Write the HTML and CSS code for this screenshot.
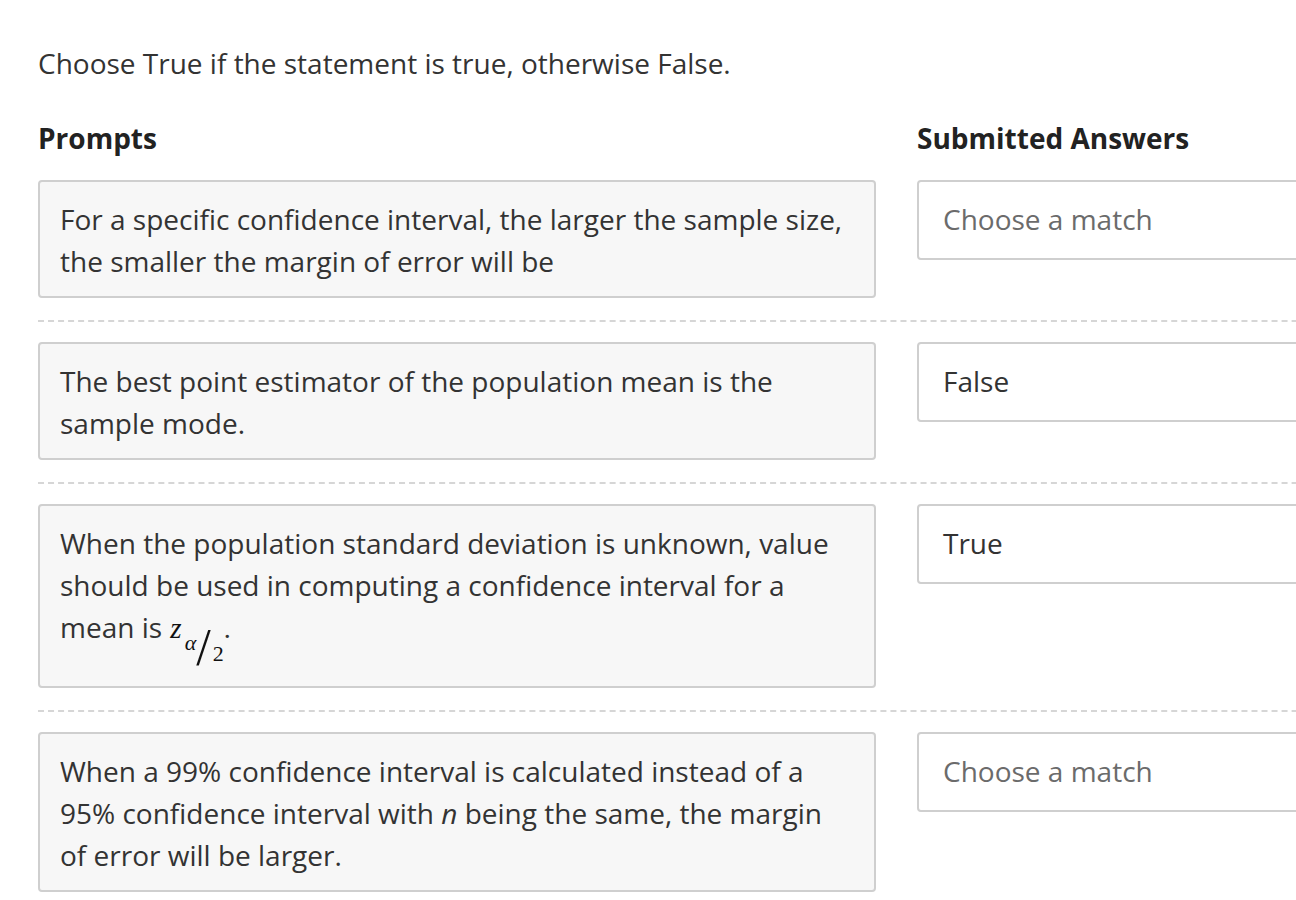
FILE: index.html
```html
<!DOCTYPE html>
<html>
<head>
<meta charset="utf-8">
<link rel="stylesheet" href="styles.css">
</head>
<body>
<div class="page">
  <p class="instructions">Choose True if the statement is true, otherwise False.</p>
  <div class="matching">
    <div class="heads">
      <div class="head">Prompts</div>
      <div class="head">Submitted Answers</div>
    </div>
    <div class="row">
      <div class="prompt">For a specific confidence interval, the larger the sample size, the smaller the margin of error will be</div>
      <div class="answer placeholder">Choose a match</div>
    </div>
    <div class="row">
      <div class="prompt">The best point estimator of the population mean is the sample mode.</div>
      <div class="answer">False</div>
    </div>
    <div class="row">
      <div class="prompt">When the population standard deviation is unknown, value should be used in computing a confidence interval for a mean is <span class="math"><span class="mz">z</span><span class="ma">α</span><span class="ms">/</span><span class="m2">2</span></span><span class="mdot">.</span></div>
      <div class="answer">True</div>
    </div>
    <div class="row last">
      <div class="prompt">When a 99% confidence interval is calculated instead of a 95% confidence interval with <i>n</i> being the same, the margin of error will be larger.</div>
      <div class="answer placeholder">Choose a match</div>
    </div>
  </div>
</div>
</body>
</html>
```
FILE: styles.css
```css
html, body {
  margin: 0;
  padding: 0;
  background: #fff;
  overflow: hidden;
}
body {
  font-family: "Open Sans", "Liberation Sans", sans-serif;
  color: #333;
  font-size: 28px;
  line-height: 42px;
}
.page {
  padding: 42px 0 0 38px;
  width: 1400px;
}
.instructions {
  margin: 0 0 33px 0;
}
.heads {
  display: grid;
  grid-template-columns: 838px 420px;
  column-gap: 41px;
  margin-bottom: 21px;
}
.head {
  font-weight: 700;
  color: #222;
}
.row {
  display: grid;
  grid-template-columns: 838px 420px;
  column-gap: 41px;
  align-items: start;
  padding-bottom: 22px;
  margin-bottom: 20px;
  border-bottom: 2px dashed #d6d6d6;
}
.row.last {
  border-bottom: none;
}
.prompt {
  background: #f7f7f7;
  border: 2px solid #cfcfcf;
  border-radius: 4px;
  padding: 16px 26px 14px 20px;
}
.answer {
  background: #fff;
  border: 2px solid #cfcfcf;
  border-radius: 4px;
  padding: 16px 24px 18px;
  color: #333;
}
.answer.placeholder {
  color: #6b6b6b;
}
.math {
  font-family: "Liberation Serif", "DejaVu Serif", serif;
  display: inline-block;
  line-height: 1;
  padding-bottom: 4px;
  margin-left: 1px;
  color: #111;
}
.mz {
  font-style: italic;
  font-size: 29px;
}
.ma {
  font-style: italic;
  font-size: 22px;
  display: inline-block;
  vertical-align: -12px;
  margin-left: 3px;
  line-height: 1;
}
.ms {
  font-size: 52px;
  display: inline-block;
  vertical-align: -27px;
  margin-left: 0;
  line-height: 40px;
}
.m2 {
  font-size: 22px;
  display: inline-block;
  vertical-align: -23px;
  margin-left: 2px;
  line-height: 1;
}
.mdot {
  font-family: "Liberation Serif", serif;
  margin-left: 0;
}
```
